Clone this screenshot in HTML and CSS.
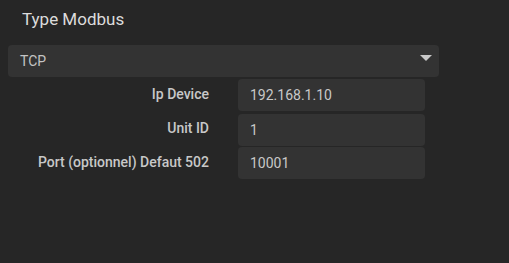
FILE: index.html
```html
<!DOCTYPE html>
<html lang="fr">
<head>
    <meta charset="UTF-8">
    <meta name="viewport" content="width=device-width, initial-scale=1.0">
    <title>Type Modbus</title>
    <link rel="stylesheet" href="styles.css">
</head>
<body>

<div class="panel">
    <h2>Type Modbus</h2>
    <div class="select">
        <span>TCP</span>
        <svg class="caret" width="12" height="6" viewBox="0 0 12 6"><path d="M0 0h12L6 6z" fill="#c8c8c8"/></svg>
    </div>
    <div class="rows">
        <label class="lbl">Ip Device</label>
        <div class="field">192.168.1.10</div>
        <label class="lbl">Unit ID</label>
        <div class="field f2">1</div>
        <label class="lbl">Port (optionnel) Defaut 502</label>
        <div class="field f3">10001</div>
    </div>
</div>

</body>
</html>
```

FILE: styles.css
```css
body {
    font-family: 'Roboto', sans-serif;
    background-color: #262626;
    color: #ccc;
    margin: 0;
}
.panel {
    padding: 0 8px;
}
h2 {
    font-size: 17px;
    font-weight: 400;
    color: #dcdcdc;
    margin: 0;
    padding: 9px 0 0 14px;
    height: 45px;
    box-sizing: border-box;
}
.select {
    width: 431px;
    height: 32px;
    background: #333;
    border-radius: 4px;
    display: flex;
    align-items: center;
    justify-content: space-between;
    padding: 0 7px 0 12px;
    box-sizing: border-box;
    font-size: 14px;
    color: #c4c4c4;
}
.caret {
    margin-top: -6px;
}
.rows {
    display: grid;
    grid-template-columns: 201px 187px;
    column-gap: 29px;
    margin-top: 2px;
    align-items: center;
}
.lbl {
    text-align: right;
    font-size: 14px;
    font-weight: 500;
    color: #c8c8c8;
    padding-bottom: 5px;
}
.field {
    height: 32px;
    background: #333;
    border-radius: 4px;
    display: flex;
    align-items: center;
    padding-left: 12px;
    font-size: 14px;
    color: #c8c8c8;
    margin-bottom: 3px;
}
.f2 {
    margin-bottom: 1px;
}
```
